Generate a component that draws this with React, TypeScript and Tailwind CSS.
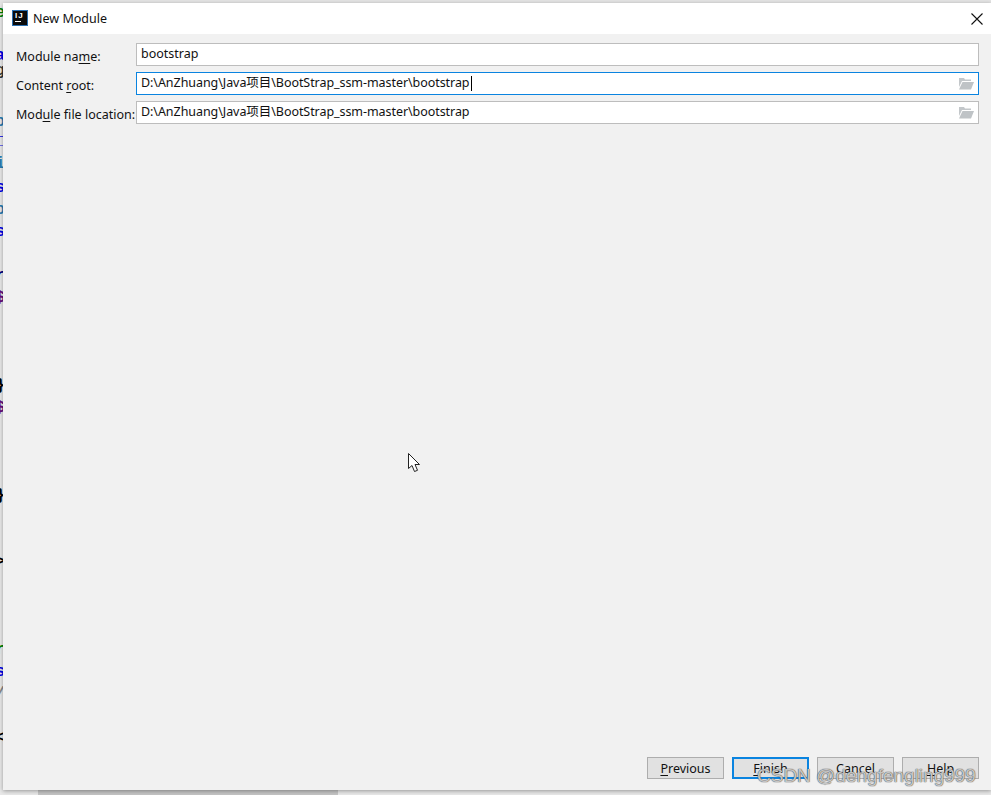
import React from 'react';

const font = "font-['Noto_Sans','Noto_Sans_CJK_SC',sans-serif]";

// bits of the editor still visible left of the dialog
const editorBits = [
  { top: 3, color: 'text-[#008000]', text: 'e' },
  { top: 46, color: 'text-[#0000e6]', text: 'a' },
  { top: 61, color: 'text-[#333333]', text: 'g' },
  { top: 112, color: 'text-[#2a7ab0]', text: 'o' },
  { top: 132, color: 'text-[#0000e6]', text: '□' },
  { top: 154, color: 'text-[#2a7ab0]', text: 'i' },
  { top: 178, color: 'text-[#0000e6]', text: 's' },
  { top: 200, color: 'text-[#2a7ab0]', text: 'o' },
  { top: 222, color: 'text-[#0000e6]', text: 's' },
  { top: 266, color: 'text-[#000080]', text: 'r' },
  { top: 288, color: 'text-[#660e7a]', text: '$' },
  { top: 376, color: 'text-[#000000]', text: '}' },
  { top: 398, color: 'text-[#660e7a]', text: '$' },
  { top: 486, color: 'text-[#000000]', text: '}' },
  { top: 552, color: 'text-[#000000]', text: '>' },
  { top: 640, color: 'text-[#008000]', text: 'r' },
  { top: 662, color: 'text-[#0000e6]', text: 's' },
  { top: 684, color: 'text-[#888888]', text: '/' },
  { top: 728, color: 'text-[#000000]', text: '<' },
];

const FolderIcon = () => (
  <svg width="16" height="13" viewBox="0 0 16 13" className="shrink-0">
    <path d="M1 1h5l1 1.5h6V4H4L1 10z" fill="#c3c7ca" />
    <path d="M4.5 5H16l-3 7.5H1z" fill="#bfc3c6" />
  </svg>
);

const Underlined = ({ children }: { children: React.ReactNode }) => (
  <span className="underline underline-offset-2">{children}</span>
);

const Field = ({
  value,
  focused,
  folder,
}: {
  value: string;
  focused?: boolean;
  folder?: boolean;
}) => (
  <div
    className={`flex h-[23px] flex-1 items-center justify-between border bg-white pl-[4px] pr-[4px] ${
      focused ? 'border-[#0a84e0]' : 'border-[#bdbdbd]'
    }`}
  >
    <span
      className={`flex items-center text-[12.5px] leading-none text-[#111111] ${
        folder ? 'tracking-[-0.06px]' : ''
      }`}
    >
      {value}
      {focused && <span className="ml-px h-[15px] w-px bg-black" />}
    </span>
    {folder && <FolderIcon />}
  </div>
);

const DialogButton = ({
  children,
  primary,
}: {
  children: React.ReactNode;
  primary?: boolean;
}) => (
  <button
    className={`flex h-[22px] w-[77px] items-center justify-center bg-[#e1e1e1] pt-[2px] text-[12.5px] leading-none text-[#111111] ${
      primary ? 'border-2 border-[#0a84e0]' : 'border border-[#adadad]'
    }`}
  >
    {children}
  </button>
);

const App: React.FC = () => {
  return (
    <div className={`relative h-[795px] w-[991px] overflow-hidden bg-[#e8e8e8] ${font}`}>
      {/* Editor behind the dialog */}
      <div className="absolute left-0 top-0 h-[3px] w-full bg-[#e4e4e4]" />
      {editorBits.map((bit) => (
        <span
          key={bit.top}
          style={{ top: bit.top }}
          className={`absolute left-[-5px] font-['Liberation_Mono',monospace] text-[17px] font-bold leading-[20px] ${bit.color}`}
        >
          {bit.text}
        </span>
      ))}
      <div className="absolute bottom-0 left-[38px] h-[5px] w-[300px] bg-[#c4c4c4]" />

      {/* Dialog window */}
      <div className="absolute left-[3px] top-[3px] flex h-[787px] w-[988px] flex-col bg-[#f1f1f1] shadow-[0_1px_4px_rgba(0,0,0,0.35)]">
        {/* Title bar */}
        <div className="flex h-[31px] shrink-0 items-center bg-white pl-[9px] pr-[7px]">
          <div className="mb-[1px] flex h-4 w-4 flex-col border border-[#2a6fb0] bg-[#0b0b0b] pl-[2px] text-white">
            <span className="font-['Liberation_Sans',sans-serif] text-[8px] font-bold leading-[9px] tracking-[1px]">
              IJ
            </span>
            <span className="mt-[1px] h-px w-[6px] bg-white" />
          </div>
          <span className="ml-[5px] flex-1 pt-[1px] text-[12.5px] leading-none text-[#111111]">New Module</span>
          <svg width="14" height="14" viewBox="0 0 14 14">
            <path d="M1.5 1.5l11 11M12.5 1.5l-11 11" stroke="#111" strokeWidth="1.1" fill="none" />
          </svg>
        </div>

        {/* Form */}
        <div className="flex flex-col gap-[6px] pl-[13px] pr-[12px] pt-[9px]">
          <div className="flex items-center">
            <label className="w-[120px] pt-[5px] text-[12.5px] leading-none text-[#111111]">
              Module na<Underlined>m</Underlined>e:
            </label>
            <Field value="bootstrap" />
          </div>
          <div className="flex items-center">
            <label className="w-[120px] pt-[5px] text-[12.5px] leading-none text-[#111111]">
              Content <Underlined>r</Underlined>oot:
            </label>
            <Field value="D:\AnZhuang\Java项目\BootStrap_ssm-master\bootstrap" focused folder />
          </div>
          <div className="flex items-center">
            <label className="w-[120px] whitespace-nowrap pt-[5px] text-[12.5px] leading-none text-[#111111]">
              Mod<Underlined>u</Underlined>le file location:
            </label>
            <Field value="D:\AnZhuang\Java项目\BootStrap_ssm-master\bootstrap" folder />
          </div>
        </div>

        {/* Buttons */}
        <div className="mt-auto flex justify-end gap-2 pb-[11px] pr-[12px]">
          <DialogButton>
            <Underlined>P</Underlined>revious
          </DialogButton>
          <DialogButton primary>
            <Underlined>F</Underlined>inish
          </DialogButton>
          <DialogButton>Cancel</DialogButton>
          <DialogButton>
            <Underlined>H</Underlined>elp
          </DialogButton>
        </div>
      </div>

      {/* Mouse pointer */}
      <svg width="14" height="20" viewBox="0 0 14 20" className="absolute left-[408px] top-[453px]">
        <path d="M0.5 0.5v15l3.5-3 2.5 6 3-1.2-2.5-5.8h4.5z" fill="#fff" stroke="#222" strokeWidth="1" />
      </svg>

      {/* Watermark */}
      <span className="absolute left-[757px] top-[766px] whitespace-nowrap font-['Liberation_Sans',sans-serif] text-[19px] leading-5 text-white/70 [text-shadow:0_0_1px_#444,0_0_1px_#444]">
        CSDN @dengfengling999
      </span>
    </div>
  );
};

export default App;
